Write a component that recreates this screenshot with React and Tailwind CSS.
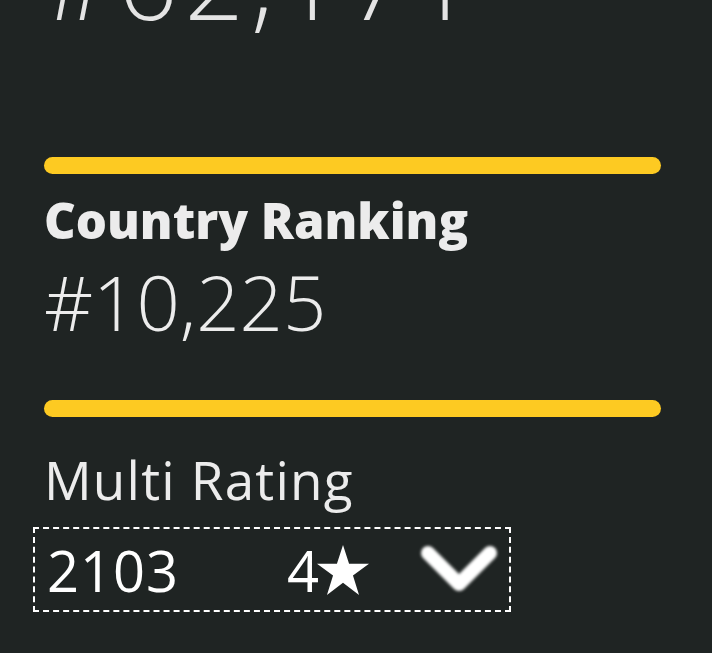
export default function App() {
  return (
    <div className="w-[712px] h-[653px] overflow-hidden bg-[#1f2423] text-[#ececec]" style={{ fontFamily: '"Open Sans", "Noto Sans", sans-serif' }}>
      <div className="pl-[44px] pr-[51px] flex flex-col">
        <div className="h-[102px] -mt-[71px] text-[104px] leading-[102px] font-light text-[#e4e4e4] whitespace-nowrap tracking-[7px]">#62,171</div>
        <div className="mt-[126px] h-[17px] rounded-full bg-[#fdca22]"></div>
        <div className="mt-[22px] h-[49px] text-[49px] leading-[49px] font-extrabold whitespace-nowrap tracking-[0px]">Country Ranking</div>
        <div className="mt-[19px] h-[76px] text-[76px] leading-[76px] font-light whitespace-nowrap">#10,225</div>
        <div className="mt-[60px] h-[17px] rounded-full bg-[#fdca22]"></div>
        <div className="mt-[36px] h-[53px] text-[53px] leading-[53px] font-normal whitespace-nowrap tracking-[1.2px]">Multi Rating</div>
        <div className="mt-[21px] -ml-[11px] w-[478px] h-[85px] border-2 border-dashed border-white flex items-center pl-[12px]">
          <span className="w-[240px] text-[56px] leading-[56px] text-white tracking-[1px]">2103</span>
          <span className="flex items-center text-[56px] leading-[56px] text-white">
            4
            <svg width="52" height="50" viewBox="0 0 24 23" className="-ml-[2px]">
              <polygon points="12,0 14.8,8.6 24,8.6 16.6,14 19.4,23 12,17.4 4.6,23 7.4,14 0,8.6 9.2,8.6" fill="white" />
            </svg>
          </span>
          <svg width="80" height="52" viewBox="0 0 80 52" className="ml-[50px] blur-[1.5px]">
            <polyline points="9,9 40,40 71,9" fill="none" stroke="white" strokeWidth="14" strokeLinecap="round" strokeLinejoin="round" />
          </svg>
        </div>
      </div>
    </div>
  );
}
